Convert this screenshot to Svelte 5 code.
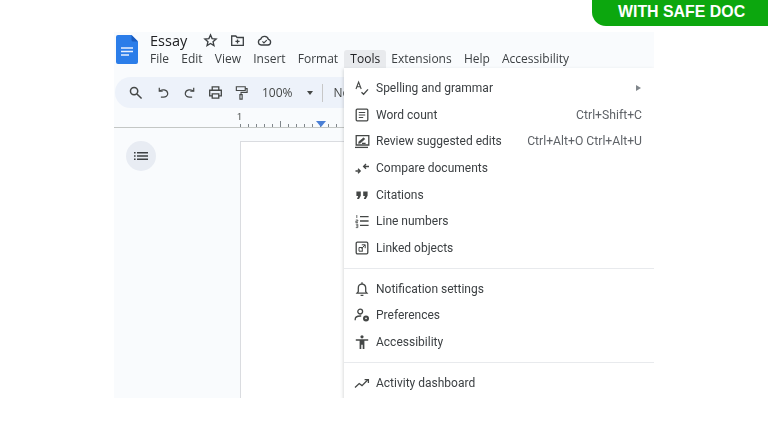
<script>
  const menuBar = ['File', 'Edit', 'View', 'Insert', 'Format', 'Tools', 'Extensions', 'Help', 'Accessibility'];
  const groups = [
    [
      { label: 'Spelling and grammar', icon: 'spell', arrow: true },
      { label: 'Word count', icon: 'count', keys: 'Ctrl+Shift+C' },
      { label: 'Review suggested edits', icon: 'review', keys: 'Ctrl+Alt+O Ctrl+Alt+U' },
      { label: 'Compare documents', icon: 'compare' },
      { label: 'Citations', icon: 'cite' },
      { label: 'Line numbers', icon: 'lines' },
      { label: 'Linked objects', icon: 'linked' }
    ],
    [
      { label: 'Notification settings', icon: 'bell' },
      { label: 'Preferences', icon: 'prefs' },
      { label: 'Accessibility', icon: 'access' }
    ],
    [{ label: 'Activity dashboard', icon: 'activity' }]
  ];
  const ticks = [0, 8, 16, 24, 32, 40, 48, 56, 64, 72, 80, 88, 96];
</script>

{#snippet menuIcon(name)}
  <svg class="micon" viewBox="0 0 16 16" fill="none" stroke="#444746" stroke-width="1.3">
    {#if name === 'spell'}
      <path d="M2 9 4.600 2 7.200 9M3 6.800h3.200" stroke-width="1.100" />
      <path d="M7.500 12.200 9.600 14.200 14 9.400" />
    {:else if name === 'count'}
      <rect x="2.200" y="2.200" width="11.600" height="11.600" rx="1" />
      <path d="M4.800 5.500h6.400M4.800 8h6.400M4.800 10.500h4.400" stroke-width="1.100" />
    {:else if name === 'review'}
      <path d="M2.200 12V2.700h12.600v9.300z" />
      <path d="M1 14.400h13" />
      <path d="M4.500 10.400 5 8.600 9.600 4.800l1.200 1.300-4.500 3.900z" fill="#444746" stroke-width=".6" />
      <path d="M8 10.400h3.600" />
    {:else if name === 'compare'}
      <path d="M1.500 11h4.500M4 8.800 6.200 11 4 13.200M15 6.500H9.800M12 4 9.600 6.500 12 8.800" />
    {:else if name === 'cite'}
      <path d="M2.400 4.500h4.400v4.200L5 12H3l1.200-3H2.400zM9.200 4.500h4.400v4.200L11.800 12h-2l1.200-3H9.200z" fill="#444746" stroke="none" />
    {:else if name === 'lines'}
      <path d="M6 3.600h8.600M6 8h8.600M6 12.400h8.600" />
      <path d="M2.800 2v3M1.800 7h2v1.200h-2v1.400h2.200M1.800 11.200h2v3.400h-2M2 12.900h1.600" stroke-width=".8" />
    {:else if name === 'linked'}
      <rect x="2.200" y="2.200" width="11.600" height="11.600" rx="1.200" />
      <path d="M5 7.500v3.700h3.800M7.800 4.800h3.400v3.400M5 7.500h3.300v3.700M7.600 8.600 11 4.900" stroke-width="1" />
    {:else if name === 'bell'}
      <path d="M3 12.200h10l-1.300-1.600V7c0-2.200-1.500-3.900-3.700-3.900S4.300 4.800 4.300 7v3.600z" />
      <path d="M6.600 14.300h2.800M8 1.300v1.700" />
    {:else if name === 'prefs'}
      <circle cx="6.200" cy="4.600" r="2.400" />
      <path d="M1.200 13.200v-1c0-2.200 2.600-3.200 5-3.200h1" />
      <circle cx="12" cy="11.400" r="3" fill="#444746" stroke="none" />
      <circle cx="12" cy="11.400" r=".8" fill="#fff" stroke="none" />
    {:else if name === 'access'}
      <circle cx="8" cy="2.800" r="1.600" fill="#444746" stroke="none" />
      <path d="M1.800 5.200h12.400v1.500H10.400V15H8.700v-4.200H7.300V15H5.600V6.700H1.800z" fill="#444746" stroke="none" />
    {:else if name === 'activity'}
      <path d="M1 12.400 5.200 8.500l2.800 2.100 5.600-5.600" />
      <path d="M10.600 4.600h3.800V8" />
    {/if}
  </svg>
{/snippet}

<div class="screen">
  <div class="docs">
    <header class="head">
      <svg class="logo" viewBox="0 0 22 29" aria-hidden="true">
        <path d="M2 0h13.500L22 6.500V27a2 2 0 0 1-2 2H2a2 2 0 0 1-2-2V2a2 2 0 0 1 2-2z" fill="#2b7de9" />
        <path d="M15.500 0 22 6.500h-5a1.500 1.500 0 0 1-1.500-1.500z" fill="#1a5cc0" />
        <path d="M5 13h12M5 16.500h12M5 20h8" stroke="#e8f0fe" stroke-width="1.600" />
      </svg>
      <div class="titles">
        <div class="titlerow">
          <span class="title">Essay</span>
          <svg class="ticon star" viewBox="0 0 16 16" fill="none" stroke="#3c4043" stroke-width="1.400"><path d="m8 2 1.700 4 4.300.4-3.300 2.800 1 4.200L8 11.200l-3.700 2.200 1-4.200L2 6.400 6.300 6z" /></svg>
          <svg class="ticon" viewBox="0 0 16 16" fill="none" stroke="#3c4043" stroke-width="1.400"><path d="M1.800 3.200h4.400l1.400 1.600h6.600v8.400H1.800z" /><path d="M8 6.800v4.400M5.800 9h4.400" /></svg>
          <svg class="ticon" viewBox="0 0 16 16" fill="none" stroke="#3c4043" stroke-width="1.400"><path d="M4.400 12.800a3.200 3.200 0 0 1-.4-6.300 4.300 4.300 0 0 1 8.200.4 3 3 0 0 1-.4 5.900z" /><path d="m5.800 9 1.600 1.600L10.400 7.600" stroke-width="1.200" /></svg>
        </div>
        <nav class="menubar">
          {#each menuBar as item}
            <span class="mitem" class:open={item === 'Tools'}>{item}</span>
          {/each}
        </nav>
      </div>
    </header>

    <div class="toolbar">
      <svg class="tool first" viewBox="0 0 16 16" fill="none" stroke="#444746" stroke-width="1.600"><circle cx="6.500" cy="6.500" r="3.900" /><path d="m9.500 9.500 5 5" /></svg>
      <svg class="tool" viewBox="0 0 16 16" fill="none" stroke="#444746" stroke-width="1.300"><path d="M3.500 3v3.600h3.600" /><path d="M3.700 6.500C6 4.200 12 4.600 12.500 9c.3 3-2.500 4-4.500 4H5.200" /></svg>
      <svg class="tool" viewBox="0 0 16 16" fill="none" stroke="#444746" stroke-width="1.300"><path d="M12.500 3v3.600H8.900" /><path d="M12.300 6.500C10 4.200 4 4.600 3.500 9c-.3 3 2.500 4 4.500 4h2.800" /></svg>
      <svg class="tool" viewBox="0 0 16 16" fill="none" stroke="#444746" stroke-width="1.400"><path d="M4.500 5V2h7v3M4.500 11.500H1.800V5.600h12.400v5.900h-2.700" /><path d="M4.500 9.500h7v4.500h-7z" /></svg>
      <svg class="tool" viewBox="0 0 16 16" fill="none" stroke="#444746" stroke-width="1.200"><path d="M2.500 1.800h9.500v4H2.500z" /><path d="M12 3.800h2v4H7.500V10" /><path d="M6.300 10.200h2.400v4.800H6.300z" /></svg>
      <span class="zoomval">100%</span>
      <span class="caret"></span>
      <span class="sep"></span>
      <span class="nfont">No</span>
    </div>

    <div class="ruler">
      <div class="scale">
        <span class="num">1</span>
        {#each ticks as t, i}
          <i class="tick" class:long={i === 5} style="left:{t}px"></i>
        {/each}
        <span class="marker"></span>
      </div>
    </div>

    <div class="workspace">
      <div class="outline">
        <svg viewBox="0 0 14 10" width="14" height="10" fill="#3c4043"><path d="M3 1h11v1.500H3zM3 4.200h11v1.500H3zM3 7.500h11V9H3zM0 1h1.600v1.500H0zM0 4.200h1.600v1.500H0zM0 7.500h1.600V9H0z" /></svg>
      </div>
      <div class="paper"></div>
    </div>

    <div class="menu">
      {#each groups as group, g}
        {#if g > 0}<div class="divider"></div>{/if}
        {#each group as row}
          <div class="row">
            {@render menuIcon(row.icon)}
            <span class="label">{row.label}</span>
            {#if row.keys}<span class="keys">{row.keys}</span>{/if}
            {#if row.arrow}<span class="arrow"></span>{/if}
          </div>
        {/each}
      {/each}
    </div>
  </div>

  <div class="badge">WITH SAFE DOC</div>
</div>

<style>
  :global(body) { margin: 0; background: #fff; }
  .screen {
    position: relative;
    width: 768px;
    height: 432px;
    overflow: hidden;
    background: #fff;
    padding: 32px 114px 34px;
    box-sizing: border-box;
    font-family: Roboto, sans-serif;
    color: #3c4043;
  }
  .docs {
    position: relative;
    width: 540px;
    height: 366px;
    background: #f9fbfd;
    overflow: hidden;
    display: flex;
    flex-direction: column;
    filter: blur(.3px);
  }
  .head { display: flex; height: 45px; flex: none; box-sizing: border-box; padding-left: 2px; }
  .logo { width: 22px; height: 29px; flex: none; margin-top: 3px; }
  .titles { margin-left: 12px; display: flex; flex-direction: column; }
  .titlerow { display: flex; align-items: center; height: 17.500px; }
  .title { font-family: "Open Sans", sans-serif; font-size: 14.500px; color: #202124; width: 53px; }
  .ticon { width: 15px; height: 15px; flex: none; margin-right: 12px; }
  .menubar { display: flex; height: 19px; align-items: center; font-family: "Open Sans", sans-serif; font-size: 12px; color: #3c4043; margin-left: -6px; }
  .mitem { padding: 0 6.100px; line-height: 18px; }
  .mitem.open { background: #e8eaed; border-radius: 3px 3px 0 0; color: #202124; margin-right: -1px; }
  .toolbar {
    margin-left: 1px;
    width: 100%;
    height: 31px;
    background: #edf2fa;
    border-radius: 16px;
    display: flex;
    align-items: center;
    padding-left: 13px;
    box-sizing: border-box;
    flex: none;
  }
  .tool { width: 15px; height: 15px; flex: none; margin-right: 11px; }
  .tool.first { margin-right: 13px; }
  .zoomval { font-family: "Open Sans", sans-serif; font-size: 12px; margin-left: 2px; color: #444746; }
  .caret { width: 0; height: 0; border: 3.500px solid transparent; border-top: 4px solid #444746; border-bottom: 0; margin-left: 14px; }
  .sep { width: 1px; height: 18px; background: #c7c7c7; margin-left: 9px; }
  .nfont { font-family: "Open Sans", sans-serif; font-size: 12px; margin-left: 11px; color: #444746; }
  .ruler { height: 20px; box-sizing: border-box; border-bottom: 1px solid #c4c7c5; flex: none; position: relative; }
  .scale { position: relative; margin-left: 126px; height: 19px; }
  .num { position: absolute; left: -3px; top: 4px; font-size: 9px; color: #444746; }
  .tick { position: absolute; bottom: 0; width: 1px; height: 3px; background: #80868b; }
  .tick.long { height: 6px; }
  .marker { position: absolute; left: 76px; top: 13px; width: 0; height: 0; border: 5px solid transparent; border-top: 6px solid #4a7fd6; border-bottom: 0; }
  .workspace { flex: 1; display: flex; padding: 13px 0 0 12px; position: relative; }
  .outline { width: 30px; height: 30px; border-radius: 50%; background: #e8ecf3; display: flex; align-items: center; justify-content: center; flex: none; }
  .paper { width: 400px; margin-left: 84px; background: #fff; border: 1px solid #dadce0; border-bottom: 0; border-right: 0; }

  .menu {
    position: absolute;
    left: 230px;
    top: 36px;
    width: 310px;
    height: 340px;
    box-sizing: border-box;
    padding-top: 6.700px;
    background: #fff;
    box-shadow: -1px 1px 3px rgba(60, 64, 67, .18);
  }
  .row { display: flex; align-items: center; height: 26.670px; padding: 0 12px 0 10px; font-size: 12px; color: #3c4043; }
  .micon { width: 16px; height: 16px; flex: none; margin-right: 6px; }
  .keys { margin-left: auto; color: #5f6368; font-size: 12.200px; }
  .arrow { margin-left: auto; width: 0; height: 0; border-left: 5px solid #80868b; border-top: 3px solid transparent; border-bottom: 3px solid transparent; margin-right: 1px; }
  .divider { height: 1px; background: #e8eaed; margin: 6.500px 0; }

  .badge {
    position: absolute;
    top: 0;
    left: 592px;
    width: 176px;
    height: 26px;
    background: #0ca70e;
    border-radius: 0 0 0 14px;
    color: #fff;
    font-family: "Liberation Sans", sans-serif;
    font-weight: 700;
    font-size: 15.900px;
    line-height: 24px;
    padding-left: 26px;
    box-sizing: border-box;
  }
</style>
